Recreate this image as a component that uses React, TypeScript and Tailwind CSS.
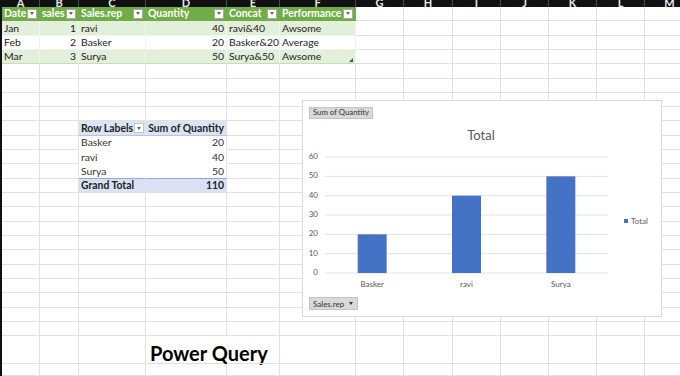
import React from 'react';
import clsx from 'clsx';
import { twMerge } from 'tailwind-merge';

const COL_W = [
  'w-[38px]', 'w-[39px]', 'w-[67px]', 'w-[81px]', 'w-[53px]', 'w-[76px]',
  'w-[48px]', 'w-[49px]', 'w-[48px]', 'w-[48px]', 'w-[48px]', 'w-[48px]', 'w-[50px]',
];
const LETTERS = 'ABCDEFGHIJKLM'.split('');

type C = { c?: React.ReactNode; cls?: string };

const Filter = ({ light }: { light?: boolean }) => (
  <span
    className={clsx(
      'ml-auto flex h-[10px] w-[10px] shrink-0 items-center justify-center border bg-white',
      light ? 'border-[#c8c8c8]' : 'border-[#a8a8a8]',
    )}
  >
    <span className="h-0 w-0 border-x-[2.5px] border-t-[3px] border-x-transparent border-t-[#666]" />
  </span>
);

const Row = ({ h, cells = [] }: { h: string; cells?: C[] }) => (
  <div className={clsx('flex', h)}>
    {COL_W.map((w, i) => (
      <div
        key={i}
        className={twMerge(
          'flex shrink-0 items-center whitespace-nowrap border-r border-b border-[#e1e1e1] px-[2px] text-[10.4px] leading-none text-[#222]',
          w,
          cells[i]?.cls,
        )}
      >
        {cells[i]?.c}
      </div>
    ))}
  </div>
);

const HEAD = 'bg-[#70ad47] border-[#70ad47] text-white font-bold';
const BAND = 'bg-[#e2efda] border-[#eef5ea]';
const PLAIN = 'border-[#eef3ec]';
const NUM = 'justify-end';

const tableHead: C[] = ['Date', 'sales', 'Sales.rep', 'Quantity', 'Concat', 'Performance'].map((t) => ({
  c: (
    <>
      <span>{t}</span>
      <Filter />
    </>
  ),
  cls: HEAD,
}));

const dataRow = (r: string[], band: boolean, last?: boolean): C[] =>
  r.map((t, i) => ({
    c: t,
    cls: clsx(band ? BAND : PLAIN, (i === 1 || i === 3) && NUM, last && 'border-b-[#c6e0b4]', i === 5 && last && 'relative'),
  }));

const PIV_HEAD = 'bg-[#dce3f3] border-b-[#b4c6e7] font-bold text-[#222]';
const pivRow = (name: string, val: string, last?: boolean): C[] => [
  {},
  {},
  { c: name, cls: clsx('bg-white border-r-white text-[#333]', last ? 'border-b-[#8ea9db]' : 'border-b-white') },
  { c: val, cls: clsx('bg-white justify-end text-[#333]', last ? 'border-b-[#8ea9db]' : 'border-b-white') },
];

function Chart() {
  const y = (v: number) => 154 - v * 1.933;
  const bars = [
    { n: 'Basker', v: 20 },
    { n: 'ravi', v: 40 },
    { n: 'Surya', v: 50 },
  ];
  return (
    <div className="absolute left-[302px] top-[100px] h-[217px] w-[360px] border border-[#d9d9d9] bg-white">
      <div className="ml-[6px] mt-[6px] flex h-[12px] w-[64px] items-center justify-center border border-[#c4c4c4] bg-[#d9d9d9] text-[7.8px] leading-none text-[#333]">
        Sum of Quantity
      </div>
      <svg width={358} height={176} className="block">
        {[0, 10, 20, 30, 40, 50, 60].map((v) => (
          <g key={v}>
            <line x1={22} x2={305} y1={y(v)} y2={y(v)} stroke="#e3e3e3" strokeWidth={1} />
            <text x={15} y={y(v)} textAnchor="end" dominantBaseline="middle" fontSize={8} fill="#595959">
              {v}
            </text>
          </g>
        ))}
        {bars.map((b, i) => {
          const cx = 22 + 94.33 * i + 47.17;
          return (
            <g key={b.n}>
              <rect x={cx - 14.5} y={y(b.v)} width={29} height={y(0) - y(b.v)} fill="#4472c4" />
              <text x={cx} y={166} textAnchor="middle" dominantBaseline="middle" fontSize={8} fill="#595959">
                {b.n}
              </text>
            </g>
          );
        })}
        <text x={178} y={18} textAnchor="middle" dominantBaseline="middle" fontSize={13} fill="#595959">
          Total
        </text>
        <rect x={321} y={100} width={4} height={4} fill="#4472c4" />
        <text x={328} y={102.5} dominantBaseline="middle" fontSize={8} fill="#595959">
          Total
        </text>
      </svg>
      <div className="ml-[6px] mt-[2px] flex h-[13px] w-[49px] items-center gap-[5px] border border-[#c4c4c4] bg-[#d9d9d9] pl-[3px] text-[8px] leading-none text-[#333]">
        <span>Sales.rep</span>
        <span className="h-0 w-0 border-x-[2.5px] border-t-[3px] border-x-transparent border-t-[#333]" />
      </div>
    </div>
  );
}

export default function App() {
  const rows: React.ReactNode[] = [];
  for (let i = 0; i < 25; i++) {
    let cells: C[] = [];
    let h = 'h-[14.45px]';
    if (i === 0) cells = tableHead;
    if (i === 1) cells = dataRow(['Jan', '1', 'ravi', '40', 'ravi&40', 'Awsome'], true);
    if (i === 2) cells = dataRow(['Feb', '2', 'Basker', '20', 'Basker&20', 'Average'], false);
    if (i === 3) {
      cells = dataRow(['Mar', '3', 'Surya', '50', 'Surya&50', 'Awsome'], true, true);
      cells[5] = {
        ...cells[5],
        c: (
          <>
            Awsome
            <span className="absolute bottom-[1px] right-[2px] h-0 w-0 border-b-[4px] border-l-[4px] border-b-[#2f5597] border-l-transparent" />
          </>
        ),
      };
    }
    if (i === 8)
      cells = [
        {},
        {},
        {
          c: (
            <>
              <span>Row Labels</span>
              <Filter light />
            </>
          ),
          cls: clsx(PIV_HEAD, 'border-r-[#dce3f3] pr-[1px]'),
        },
        { c: 'Sum of Quantity', cls: clsx(PIV_HEAD, 'justify-end') },
      ];
    if (i === 9) cells = pivRow('Basker', '20');
    if (i === 10) cells = pivRow('ravi', '40');
    if (i === 11) cells = pivRow('Surya', '50', true);
    if (i === 12)
      cells = [
        {},
        {},
        { c: 'Grand Total', cls: 'bg-[#d9e1f2] border-r-[#d9e1f2] font-bold text-[#222]' },
        { c: '110', cls: 'bg-[#d9e1f2] justify-end font-bold text-[#222]' },
      ];
    if (i === 23) {
      h = 'h-[28px]';
      cells = [
        {},
        {},
        {},
        { c: 'Power Query', cls: 'border-r-transparent pl-[4px] pt-[7px] text-[20px] font-bold text-black' },
      ];
    }
    if (i === 24) h = 'h-[12px]';
    rows.push(<Row key={i} h={h} cells={cells} />);
  }

  return (
    <div className="relative flex h-[376px] w-[680px] overflow-hidden bg-white font-['Lato','Liberation_Sans',sans-serif]">
      <div className="h-full w-[2px] shrink-0 bg-[#111]" />
      <div className="flex flex-col">
        <div className="flex h-[7px] overflow-hidden bg-[#111]">
          {COL_W.map((w, i) => (
            <div
              key={i}
              className={clsx('flex shrink-0 items-end justify-center border-r border-[#4a4a4a] text-[11px] font-bold leading-[11px] text-[#e8e8e8]', w)}
            >
              <span className="translate-y-[1px]">{LETTERS[i]}</span>
            </div>
          ))}
        </div>
        {rows}
      </div>
      <Chart />
    </div>
  );
}
